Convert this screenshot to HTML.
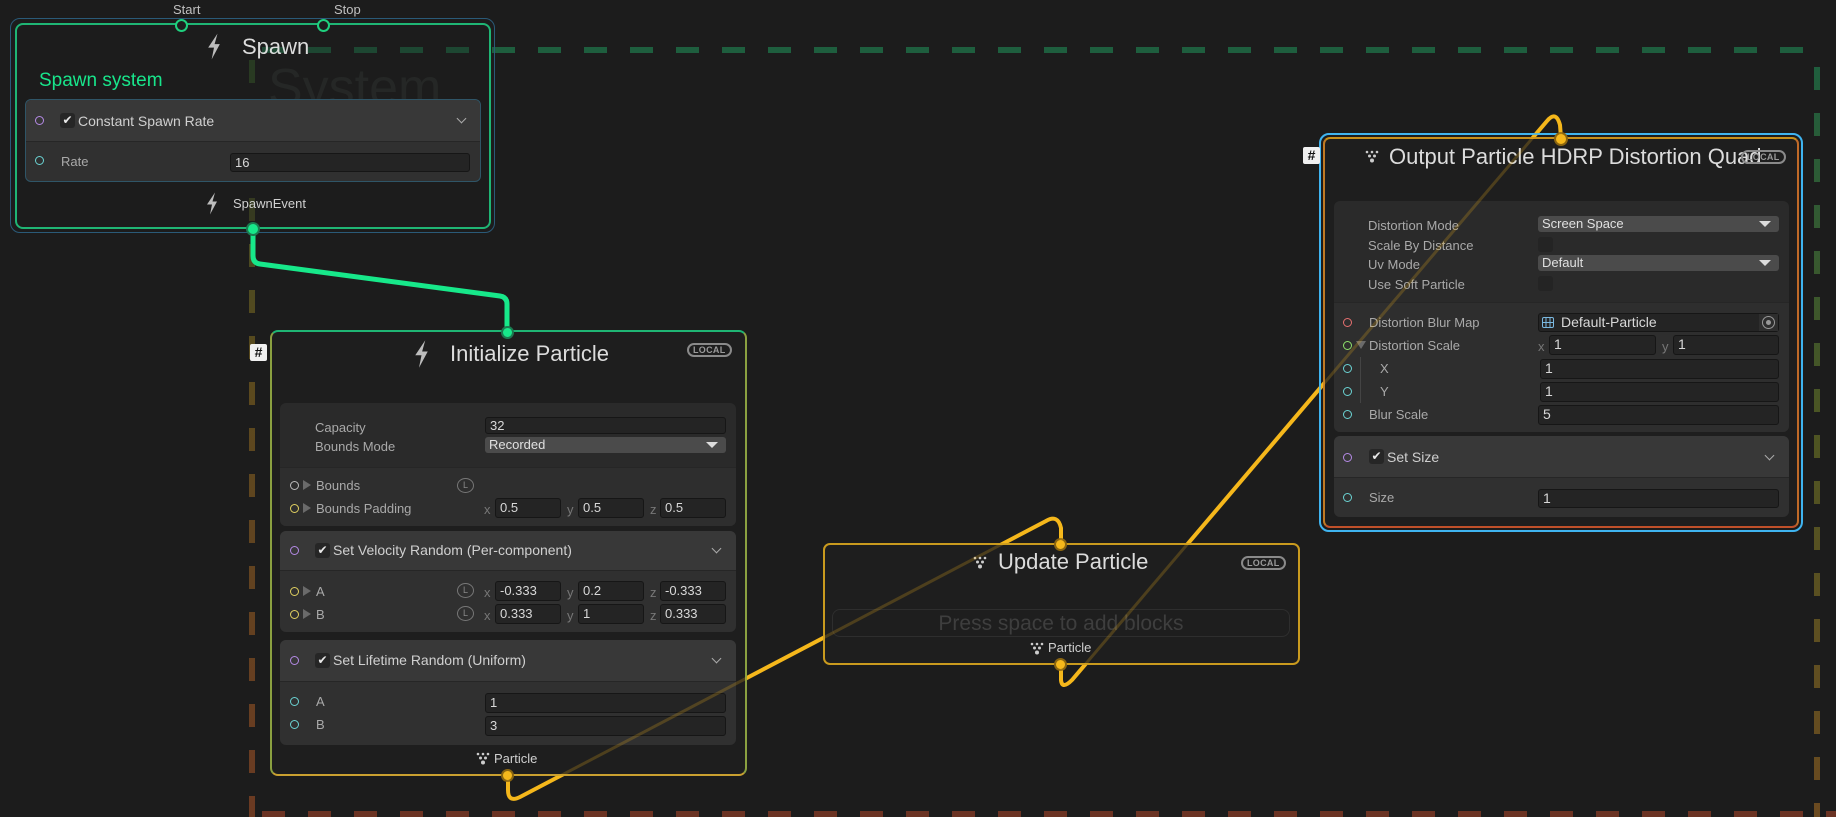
<!DOCTYPE html>
<html><head><meta charset="utf-8"><style>
*{margin:0;padding:0;box-sizing:border-box}
body{width:1836px;height:817px;background:#1c1c1c;position:relative;overflow:hidden;font-family:"Liberation Sans",sans-serif;color:#c4c4c4}
.a{position:absolute}
.t{position:absolute;white-space:nowrap;line-height:1}
.lbl{font-size:13px;color:#a9a9a9}
.f{position:absolute;background:#242424;border:1px solid #161616;border-radius:3px;font-size:13px;color:#d8d8d8;padding-left:4px;line-height:17px;white-space:nowrap}
.dd{position:absolute;background:#4b4b4b;border-radius:3px;font-size:13px;color:#e0e0e0;padding-left:4px;line-height:16px;white-space:nowrap}
.dd:after{content:"";position:absolute;right:8px;top:5px;border-left:6px solid transparent;border-right:6px solid transparent;border-top:6px solid #ddd}
.p{position:absolute;width:9px;height:9px;border-radius:50%;border:1.5px solid #bbb}
.cb{position:absolute;width:15px;height:15px;background:#262626;border-radius:3px;color:#e8e8e8;font-size:12px;line-height:15px;text-align:center}
.chev{position:absolute;width:7px;height:7px;border-right:1.5px solid #aaa;border-bottom:1.5px solid #aaa;transform:rotate(45deg)}
.local{position:absolute;border:2px solid #8a8a8a;border-radius:8px;font-size:9px;font-weight:bold;color:#9a9a9a;line-height:10px;padding:0 4px;letter-spacing:.3px}
.hash{position:absolute;width:17px;height:17px;background:#f0f0f0;color:#111;font-weight:bold;font-size:14px;line-height:17px;text-align:center;border-radius:2px}
.blk{position:absolute;background:#2e2e2e;border-radius:6px}
.hdr{position:absolute;background:#383838}
.tri{position:absolute;border-top:5px solid transparent;border-bottom:5px solid transparent;border-left:8px solid #6a6a6a}
.Lc{position:absolute;width:17px;height:15px;border:1.5px solid #777;border-radius:50%;font-size:9px;color:#888;text-align:center;line-height:12px}
.ax{position:absolute;font-size:13px;color:#777;line-height:1}
</style></head><body>

<svg class="a" style="left:0;top:0" width="1836" height="817">
<defs>
<linearGradient id="lg" gradientUnits="userSpaceOnUse" x1="0" y1="60" x2="0" y2="817"><stop offset="0" stop-color="#2e4a26"/><stop offset="0.4" stop-color="#5a4a1e"/><stop offset="1" stop-color="#6b3a22"/></linearGradient>
<linearGradient id="rg" gradientUnits="userSpaceOnUse" x1="0" y1="60" x2="0" y2="817"><stop offset="0" stop-color="#1e5e3e"/><stop offset="0.5" stop-color="#4e5422"/><stop offset="1" stop-color="#6b4a20"/></linearGradient>
</defs>
<line x1="262" y1="50" x2="1806" y2="50" stroke="#1e5e3e" stroke-width="6" stroke-dasharray="23 23"/>
<line x1="262" y1="814" x2="1836" y2="814" stroke="#6b3323" stroke-width="6" stroke-dasharray="23 23"/>
<line x1="252" y1="60" x2="252" y2="817" stroke="url(#lg)" stroke-width="6" stroke-dasharray="23 23"/>
<line x1="1817" y1="67" x2="1817" y2="817" stroke="url(#rg)" stroke-width="6" stroke-dasharray="23 23"/>
<text x="268" y="105" font-family="Liberation Sans" font-size="52" fill="#2a2d2b">System</text>
<path d="M253,229 L253,256 Q253,263 260,264 L500,296 Q507,297 507,304 L507,331" fill="none" stroke="#17e88a" stroke-width="5"/>
<path d="M508,775 L508,790 Q508,803 520,797 L1046,521 Q1058,514 1061,528 L1061,544" fill="none" stroke="#f5b81c" stroke-width="4"/>
<path d="M1061,664 L1061,680 Q1062,690 1072,680 L1547,121 Q1556,110 1560,125 L1561,138" fill="none" stroke="#f5b81c" stroke-width="4"/>
</svg>

<!-- SPAWN -->
<div class="a" style="left:10px;top:18px;width:485px;height:215px;border:1.5px solid #2a5a78;border-radius:10px"></div>
<div class="a" style="left:15px;top:23px;width:476px;height:206px;border:2px solid #1fb574;border-radius:8px;background:rgba(28,28,28,0.35)"></div>
<div class="t" style="left:173px;top:3px;font-size:13px;color:#c0c0c0">Start</div>
<div class="t" style="left:334px;top:3px;font-size:13px;color:#c0c0c0">Stop</div>
<div class="p" style="left:175px;top:19px;width:13px;height:13px;border:2px solid #1fd07e;background:#1e1e1e"></div>
<div class="p" style="left:317px;top:19px;width:13px;height:13px;border:2px solid #1fd07e;background:#1e1e1e"></div>
<svg class="a" style="left:207px;top:33px" width="14" height="27" viewBox="0 0 12 22"><path d="M9 0 L1 12 H6 L4 22 L11 9 H6.5 Z" fill="#bdbdbd"/></svg>
<div class="t" style="left:242px;top:36px;font-size:22px;color:#dcdcdc">Spawn</div>
<div class="t" style="left:39px;top:71px;font-size:19px;color:#18e58b">Spawn system</div>
<div class="blk" style="left:25px;top:99px;width:456px;height:83px;border:1px solid #2f5567;background:#303030;overflow:hidden"><div class="hdr" style="left:0;top:0;width:100%;height:42px;border-bottom:1px solid #262626"></div></div>
<div class="p" style="left:35px;top:116px;border-color:#b58ae6"></div>
<div class="cb" style="left:60px;top:113px">✔</div>
<div class="t" style="left:78px;top:114px;font-size:14px;color:#d0d0d0">Constant Spawn Rate</div>
<div class="chev" style="left:458px;top:115px"></div>
<div class="p" style="left:35px;top:156px;border-color:#6bd3d3"></div>
<div class="t lbl" style="left:61px;top:155px">Rate</div>
<div class="f" style="left:230px;top:153px;width:240px;height:19px">16</div>
<svg class="a" style="left:206px;top:192px" width="12" height="23" viewBox="0 0 12 22"><path d="M9 0 L1 12 H6 L4 22 L11 9 H6.5 Z" fill="#bdbdbd"/></svg>
<div class="t" style="left:233px;top:197px;font-size:13px;color:#d0d0d0">SpawnEvent</div>
<div class="p" style="left:246px;top:222px;width:14px;height:14px;border:2px solid #1b7a50;background:#17e88a"></div>

<!-- INITIALIZE -->
<div class="a" style="left:270px;top:330px;width:477px;height:446px;border:2px solid;border-color:#1fb574 #8aa040 #c9a030 #8aa040;border-radius:8px;background:#1e1e1e"></div>
<div class="hash" style="left:250px;top:344px">#</div>
<div class="p" style="left:501px;top:326px;width:13px;height:13px;border:2px solid #1b7a50;background:#17e88a"></div>
<svg class="a" style="left:414px;top:340px" width="15" height="28" viewBox="0 0 12 22"><path d="M9 0 L1 12 H6 L4 22 L11 9 H6.5 Z" fill="#bdbdbd"/></svg>
<div class="t" style="left:450px;top:343px;font-size:22px;color:#dcdcdc">Initialize Particle</div>
<div class="local" style="left:687px;top:343px">LOCAL</div>

<div class="blk" style="left:280px;top:403px;width:456px;height:123px;background:#2a2a2a;overflow:hidden"><div class="a" style="left:0;top:64px;width:100%;height:59px;background:#2e2e2e;border-top:1px solid #262626"></div></div>
<div class="t lbl" style="left:315px;top:421px">Capacity</div>
<div class="f" style="left:485px;top:417px;width:241px;height:17px;line-height:15px">32</div>
<div class="t lbl" style="left:315px;top:440px">Bounds Mode</div>
<div class="dd" style="left:485px;top:437px;width:241px;height:16px">Recorded</div>
<div class="p" style="left:290px;top:481px"></div><div class="tri" style="left:303px;top:480px"></div>
<div class="t lbl" style="left:316px;top:479px">Bounds</div>
<div class="Lc" style="left:457px;top:478px">L</div>
<div class="p" style="left:290px;top:504px;border-color:#e0d060"></div><div class="tri" style="left:303px;top:503px"></div>
<div class="t lbl" style="left:316px;top:502px">Bounds Padding</div>
<div class="ax" style="left:484px;top:503px">x</div><div class="f" style="left:495px;top:498px;width:66px;height:20px">0.5</div>
<div class="ax" style="left:567px;top:503px">y</div><div class="f" style="left:578px;top:498px;width:66px;height:20px">0.5</div>
<div class="ax" style="left:650px;top:503px">z</div><div class="f" style="left:660px;top:498px;width:66px;height:20px">0.5</div>

<div class="blk" style="left:280px;top:531px;width:456px;height:101px;background:#303030;overflow:hidden"><div class="hdr" style="left:0;top:0;width:100%;height:40px;border-bottom:1px solid #262626"></div></div>
<div class="p" style="left:290px;top:546px;border-color:#b58ae6"></div>
<div class="cb" style="left:315px;top:543px">✔</div>
<div class="t" style="left:333px;top:543px;font-size:14px;color:#d0d0d0">Set Velocity Random (Per-component)</div>
<div class="chev" style="left:713px;top:545px"></div>
<div class="p" style="left:290px;top:587px;border-color:#e0d060"></div><div class="tri" style="left:303px;top:586px"></div>
<div class="t lbl" style="left:316px;top:585px">A</div>
<div class="Lc" style="left:457px;top:583px">L</div>
<div class="ax" style="left:484px;top:586px">x</div><div class="f" style="left:495px;top:581px;width:66px;height:20px">-0.333</div>
<div class="ax" style="left:567px;top:586px">y</div><div class="f" style="left:578px;top:581px;width:66px;height:20px">0.2</div>
<div class="ax" style="left:650px;top:586px">z</div><div class="f" style="left:660px;top:581px;width:66px;height:20px">-0.333</div>
<div class="p" style="left:290px;top:610px;border-color:#e0d060"></div><div class="tri" style="left:303px;top:609px"></div>
<div class="t lbl" style="left:316px;top:608px">B</div>
<div class="Lc" style="left:457px;top:606px">L</div>
<div class="ax" style="left:484px;top:609px">x</div><div class="f" style="left:495px;top:604px;width:66px;height:20px">0.333</div>
<div class="ax" style="left:567px;top:609px">y</div><div class="f" style="left:578px;top:604px;width:66px;height:20px">1</div>
<div class="ax" style="left:650px;top:609px">z</div><div class="f" style="left:660px;top:604px;width:66px;height:20px">0.333</div>

<div class="blk" style="left:280px;top:640px;width:456px;height:105px;background:#303030;overflow:hidden"><div class="hdr" style="left:0;top:0;width:100%;height:42px;border-bottom:1px solid #262626"></div></div>
<div class="p" style="left:290px;top:656px;border-color:#b58ae6"></div>
<div class="cb" style="left:315px;top:653px">✔</div>
<div class="t" style="left:333px;top:653px;font-size:14px;color:#d0d0d0">Set Lifetime Random (Uniform)</div>
<div class="chev" style="left:713px;top:655px"></div>
<div class="p" style="left:290px;top:697px;border-color:#6bd3d3"></div>
<div class="t lbl" style="left:316px;top:695px">A</div>
<div class="f" style="left:485px;top:693px;width:241px;height:20px">1</div>
<div class="p" style="left:290px;top:720px;border-color:#6bd3d3"></div>
<div class="t lbl" style="left:316px;top:718px">B</div>
<div class="f" style="left:485px;top:716px;width:241px;height:20px">3</div>
<svg class="a" style="left:476px;top:752px" width="14" height="13"><circle cx="2" cy="2" r="1.3" fill="#ccc"/><circle cx="7" cy="2" r="1.3" fill="#ccc"/><circle cx="12" cy="2" r="1.3" fill="#ccc"/><circle cx="4.5" cy="6" r="1.5" fill="#ccc"/><circle cx="9.5" cy="6" r="1.5" fill="#ccc"/><circle cx="7" cy="10.5" r="2" fill="#ccc"/></svg>
<div class="t" style="left:494px;top:752px;font-size:13px;color:#d0d0d0">Particle</div>
<div class="p" style="left:501px;top:769px;width:13px;height:13px;border:2px solid #8a6510;background:#f5b81c"></div>

<!-- UPDATE -->
<div class="a" style="left:823px;top:543px;width:477px;height:122px;border:2px solid #c99a1e;border-radius:7px;background:#1e1e1e"></div>
<svg class="a" style="left:973px;top:556px" width="14" height="13"><circle cx="2" cy="2" r="1.3" fill="#ccc"/><circle cx="7" cy="2" r="1.3" fill="#ccc"/><circle cx="12" cy="2" r="1.3" fill="#ccc"/><circle cx="4.5" cy="6" r="1.5" fill="#ccc"/><circle cx="9.5" cy="6" r="1.5" fill="#ccc"/><circle cx="7" cy="10.5" r="2" fill="#ccc"/></svg>
<div class="t" style="left:998px;top:551px;font-size:22px;color:#dcdcdc">Update Particle</div>
<div class="local" style="left:1241px;top:556px">LOCAL</div>
<div class="a" style="left:832px;top:609px;width:458px;height:28px;border:1px solid #2e2e2e;border-radius:8px"></div>
<div class="t" style="left:832px;top:613px;width:458px;text-align:center;font-size:21px;color:#3e3e3e">Press space to add blocks</div>
<svg class="a" style="left:1030px;top:642px" width="14" height="13"><circle cx="2" cy="2" r="1.3" fill="#ccc"/><circle cx="7" cy="2" r="1.3" fill="#ccc"/><circle cx="12" cy="2" r="1.3" fill="#ccc"/><circle cx="4.5" cy="6" r="1.5" fill="#ccc"/><circle cx="9.5" cy="6" r="1.5" fill="#ccc"/><circle cx="7" cy="10.5" r="2" fill="#ccc"/></svg>
<div class="t" style="left:1048px;top:641px;font-size:13px;color:#d0d0d0">Particle</div>
<div class="p" style="left:1054px;top:538px;width:13px;height:13px;border:2px solid #8a6510;background:#f5b81c"></div>
<div class="p" style="left:1054px;top:658px;width:13px;height:13px;border:2px solid #8a6510;background:#f5b81c"></div>

<!-- OUTPUT -->
<div class="a" style="left:1319px;top:133px;width:484px;height:399px;border:2px solid #3fb4f0;border-radius:10px"></div>
<div class="a" style="left:1323px;top:137px;width:476px;height:391px;border:2px solid;border-color:#c8901a #c06a28 #c0502a #c07a24;border-radius:7px;background:#1e1e1e"></div>
<div class="hash" style="left:1303px;top:147px">#</div>
<svg class="a" style="left:1365px;top:150px" width="14" height="13"><circle cx="2" cy="2" r="1.3" fill="#ccc"/><circle cx="7" cy="2" r="1.3" fill="#ccc"/><circle cx="12" cy="2" r="1.3" fill="#ccc"/><circle cx="4.5" cy="6" r="1.5" fill="#ccc"/><circle cx="9.5" cy="6" r="1.5" fill="#ccc"/><circle cx="7" cy="10.5" r="2" fill="#ccc"/></svg>
<div class="t" style="left:1389px;top:146px;font-size:22px;color:#dcdcdc">Output Particle HDRP Distortion Quad</div>
<div class="local" style="left:1741px;top:150px">LOCAL</div>
<div class="p" style="left:1554px;top:132px;width:14px;height:14px;border:2px solid #8a6510;background:#f5b81c"></div>

<div class="blk" style="left:1334px;top:201px;width:455px;height:231px;background:#2a2a2a;overflow:hidden"><div class="a" style="left:0;top:101px;width:100%;height:130px;background:#2e2e2e;border-top:1px solid #262626"></div></div>
<div class="t lbl" style="left:1368px;top:219px">Distortion Mode</div>
<div class="dd" style="left:1538px;top:216px;width:241px;height:16px">Screen Space</div>
<div class="t lbl" style="left:1368px;top:239px">Scale By Distance</div>
<div class="cb" style="left:1538px;top:237px;background:#242424"></div>
<div class="t lbl" style="left:1368px;top:258px">Uv Mode</div>
<div class="dd" style="left:1538px;top:255px;width:241px;height:16px">Default</div>
<div class="t lbl" style="left:1368px;top:278px">Use Soft Particle</div>
<div class="cb" style="left:1538px;top:276px;background:#242424"></div>

<div class="p" style="left:1343px;top:318px;border-color:#e67070"></div>
<div class="t lbl" style="left:1369px;top:316px">Distortion Blur Map</div>
<div class="f" style="left:1538px;top:313px;width:241px;height:19px;padding-left:22px;font-size:14px">Default-Particle</div>
<svg class="a" style="left:1542px;top:317px" width="12" height="11"><rect x="0.5" y="0.5" width="11" height="10" rx="1.5" fill="none" stroke="#7ab8e0"/><line x1="0" y1="5.5" x2="12" y2="5.5" stroke="#7ab8e0"/><line x1="4" y1="0" x2="4" y2="11" stroke="#7ab8e0"/><line x1="8" y1="0" x2="8" y2="11" stroke="#7ab8e0"/></svg>
<div class="a" style="left:1759px;top:314px;width:19px;height:17px;background:#2e2e2e"></div>
<div class="a" style="left:1762px;top:316px;width:13px;height:13px;border:1.5px solid #999;border-radius:50%"></div>
<div class="a" style="left:1766px;top:320px;width:5px;height:5px;background:#999;border-radius:50%"></div>

<div class="p" style="left:1343px;top:341px;border-color:#8ee06b"></div>
<div class="a" style="left:1356px;top:341px;border-left:5px solid transparent;border-right:5px solid transparent;border-top:8px solid #6a6a6a"></div>
<div class="t lbl" style="left:1369px;top:339px">Distortion Scale</div>
<div class="ax" style="left:1538px;top:340px">x</div><div class="f" style="left:1549px;top:335px;width:107px;height:20px;font-size:14px">1</div>
<div class="ax" style="left:1662px;top:340px">y</div><div class="f" style="left:1673px;top:335px;width:106px;height:20px;font-size:14px">1</div>
<div class="a" style="left:1360px;top:357px;width:1px;height:46px;background:#444"></div>
<div class="p" style="left:1343px;top:364px;border-color:#6bd3d3"></div>
<div class="t lbl" style="left:1380px;top:362px">X</div>
<div class="f" style="left:1540px;top:359px;width:239px;height:20px;font-size:14px">1</div>
<div class="p" style="left:1343px;top:387px;border-color:#6bd3d3"></div>
<div class="t lbl" style="left:1380px;top:385px">Y</div>
<div class="f" style="left:1540px;top:382px;width:239px;height:20px;font-size:14px">1</div>
<div class="p" style="left:1343px;top:410px;border-color:#6bd3d3"></div>
<div class="t lbl" style="left:1369px;top:408px">Blur Scale</div>
<div class="f" style="left:1538px;top:405px;width:241px;height:20px;font-size:14px">5</div>

<div class="blk" style="left:1334px;top:436px;width:455px;height:81px;background:#303030;overflow:hidden"><div class="hdr" style="left:0;top:0;width:100%;height:42px;border-bottom:1px solid #262626"></div></div>
<div class="p" style="left:1343px;top:453px;border-color:#b58ae6"></div>
<div class="cb" style="left:1369px;top:449px">✔</div>
<div class="t" style="left:1387px;top:450px;font-size:14px;color:#d0d0d0">Set Size</div>
<div class="chev" style="left:1766px;top:452px"></div>
<div class="p" style="left:1343px;top:493px;border-color:#6bd3d3"></div>
<div class="t lbl" style="left:1369px;top:491px">Size</div>
<div class="f" style="left:1538px;top:489px;width:241px;height:19px;font-size:14px">1</div>

<svg class="a" style="left:0;top:0;pointer-events:none" width="1836" height="817">
<path d="M508,775 L508,790 Q508,803 520,797 L1046,521 Q1058,514 1061,528 L1061,544" fill="none" stroke="#f5b81c" stroke-width="3" opacity="0.22"/>
<path d="M1061,664 L1061,680 Q1062,690 1072,680 L1547,121 Q1556,110 1560,125 L1561,138" fill="none" stroke="#f5b81c" stroke-width="3" opacity="0.22"/>
</svg>
</body></html>
